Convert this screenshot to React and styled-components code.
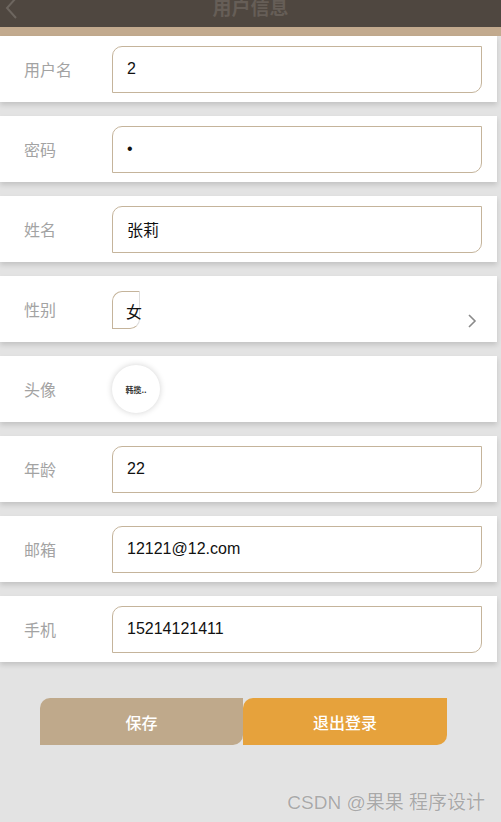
import styled, { createGlobalStyle } from "styled-components";

const Global = createGlobalStyle`
  body {
    margin: 0;
    background: #e3e3e3;
    font-family: "Liberation Sans", "Noto Sans CJK SC", sans-serif;
  }
`;

const Page = styled.div`
  width: 501px;
  min-height: 822px;
  display: flex;
  flex-direction: column;
  background: #e3e3e3;
`;

const Header = styled.div`
  height: 27px;
  background: #4f4740;
  display: flex;
  justify-content: center;
  align-items: flex-start;
  position: relative;
  overflow: hidden;
  border-bottom: 9px solid #c2aa8e;
`;

const Back = styled.div`
  position: absolute;
  left: 4px;
  top: -3px;
  display: flex;
`;

const Title = styled.h1`
  margin: -5px 0 0;
  font-size: 19px;
  line-height: 24px;
  font-weight: bold;
  color: #665e57;
  font-family: "Noto Sans CJK SC", sans-serif;
`;

const List = styled.div`
  display: flex;
  flex-direction: column;
  gap: 14px;
  width: 497px;
`;

const Row = styled.div`
  height: 66px;
  background: #fff;
  display: flex;
  align-items: center;
  position: relative;
  box-shadow: 0 3px 5px rgba(0, 0, 0, 0.14);
`;

const Label = styled.div`
  width: 112px;
  padding-left: 24px;
  box-sizing: border-box;
  font-size: 16px;
  color: #a3a3a3;
  font-family: "Noto Sans CJK SC", sans-serif;
`;

const Field = styled.input`
  width: ${({ $w }) => $w || "370px"};
  height: ${({ $h }) => $h || "47px"};
  box-sizing: border-box;
  border: 1px solid #c5b49b;
  border-radius: 10px 0 10px 0;
  padding: 0 0 0 14px;
  font-size: 16px;
  color: #111;
  background: #fff;
  font-family: "Liberation Sans", "Noto Sans CJK SC", sans-serif;
  outline: none;
`;

const Small = styled.div`
  width: 28px;
  height: 38px;
  box-sizing: border-box;
  border: 1px solid #c5b49b;
  border-right-color: #ddd;
  border-radius: 10px 0 10px 0;
  margin-top: 2px;
  padding: 9px 0 0 13px;
  font-size: 16px;
  color: #111;
  white-space: nowrap;
  font-family: "Noto Sans CJK SC", sans-serif;
  line-height: 20px;
`;

const Arrow = styled.div`
  position: absolute;
  right: 20px;
  top: 38px;
  display: flex;
`;

const Avatar = styled.div`
  width: 48px;
  height: 48px;
  border-radius: 50%;
  background: #fff;
  box-shadow: 0 0 6px rgba(0, 0, 0, 0.18);
  display: flex;
  align-items: center;
  justify-content: center;
  font-size: 8px;
  font-weight: bold;
  color: #333;
  font-family: "Noto Sans CJK SC", sans-serif;
`;

const Buttons = styled.div`
  display: flex;
  padding: 36px 0 0 40px;
`;

const Btn = styled.div`
  width: ${({ $w }) => $w};
  height: 47px;
  background: ${({ $bg }) => $bg};
  border-radius: 10px 0 10px 0;
  display: flex;
  align-items: center;
  justify-content: center;
  color: #fff;
  font-size: 16px;
  font-weight: 500;
  font-family: "Noto Sans CJK SC", sans-serif;
`;

const Mark = styled.div`
  margin-top: auto;
  padding: 0 16px 8px 0;
  text-align: right;
  font-size: 19px;
  color: #a9a9a9;
  text-shadow: 0 0 1px #fff;
  font-family: "Liberation Sans", "Noto Sans CJK SC", sans-serif;
`;

const fields = [
  { label: "用户名", value: "2" },
  { label: "密码", value: "1", type: "password" },
  { label: "姓名", value: "张莉" },
  { label: "性别", kind: "gender", value: "女" },
  { label: "头像", kind: "avatar" },
  { label: "年龄", value: "22" },
  { label: "邮箱", value: "12121@12.com" },
  { label: "手机", value: "15214121411" },
];

export default function App() {
  return (
    <Page>
      <Global />
      <Header>
        <Back>
          <svg width="14" height="22" viewBox="0 0 14 22">
            <path d="M12 1 L3 11 L12 21" fill="none" stroke="#6d665f" strokeWidth="2" />
          </svg>
        </Back>
        <Title>用户信息</Title>
      </Header>
      <List>
        {fields.map((f) => (
          <Row key={f.label}>
            <Label>{f.label}</Label>
            {f.kind === "gender" ? (
              <>
                <Small>{f.value}</Small>
                <Arrow>
                  <svg width="10" height="14" viewBox="0 0 10 14">
                    <path d="M2 1 L8 7 L2 13" fill="none" stroke="#8a8a8a" strokeWidth="1.6" />
                  </svg>
                </Arrow>
              </>
            ) : f.kind === "avatar" ? (
              <Avatar>韩揽..</Avatar>
            ) : (
              <Field readOnly type={f.type || "text"} value={f.value} />
            )}
          </Row>
        ))}
      </List>
      <Buttons>
        <Btn $w="203px" $bg="#bfa98b">保存</Btn>
        <Btn $w="204px" $bg="#e6a23c">退出登录</Btn>
      </Buttons>
      <Mark>CSDN @果果 程序设计</Mark>
    </Page>
  );
}
